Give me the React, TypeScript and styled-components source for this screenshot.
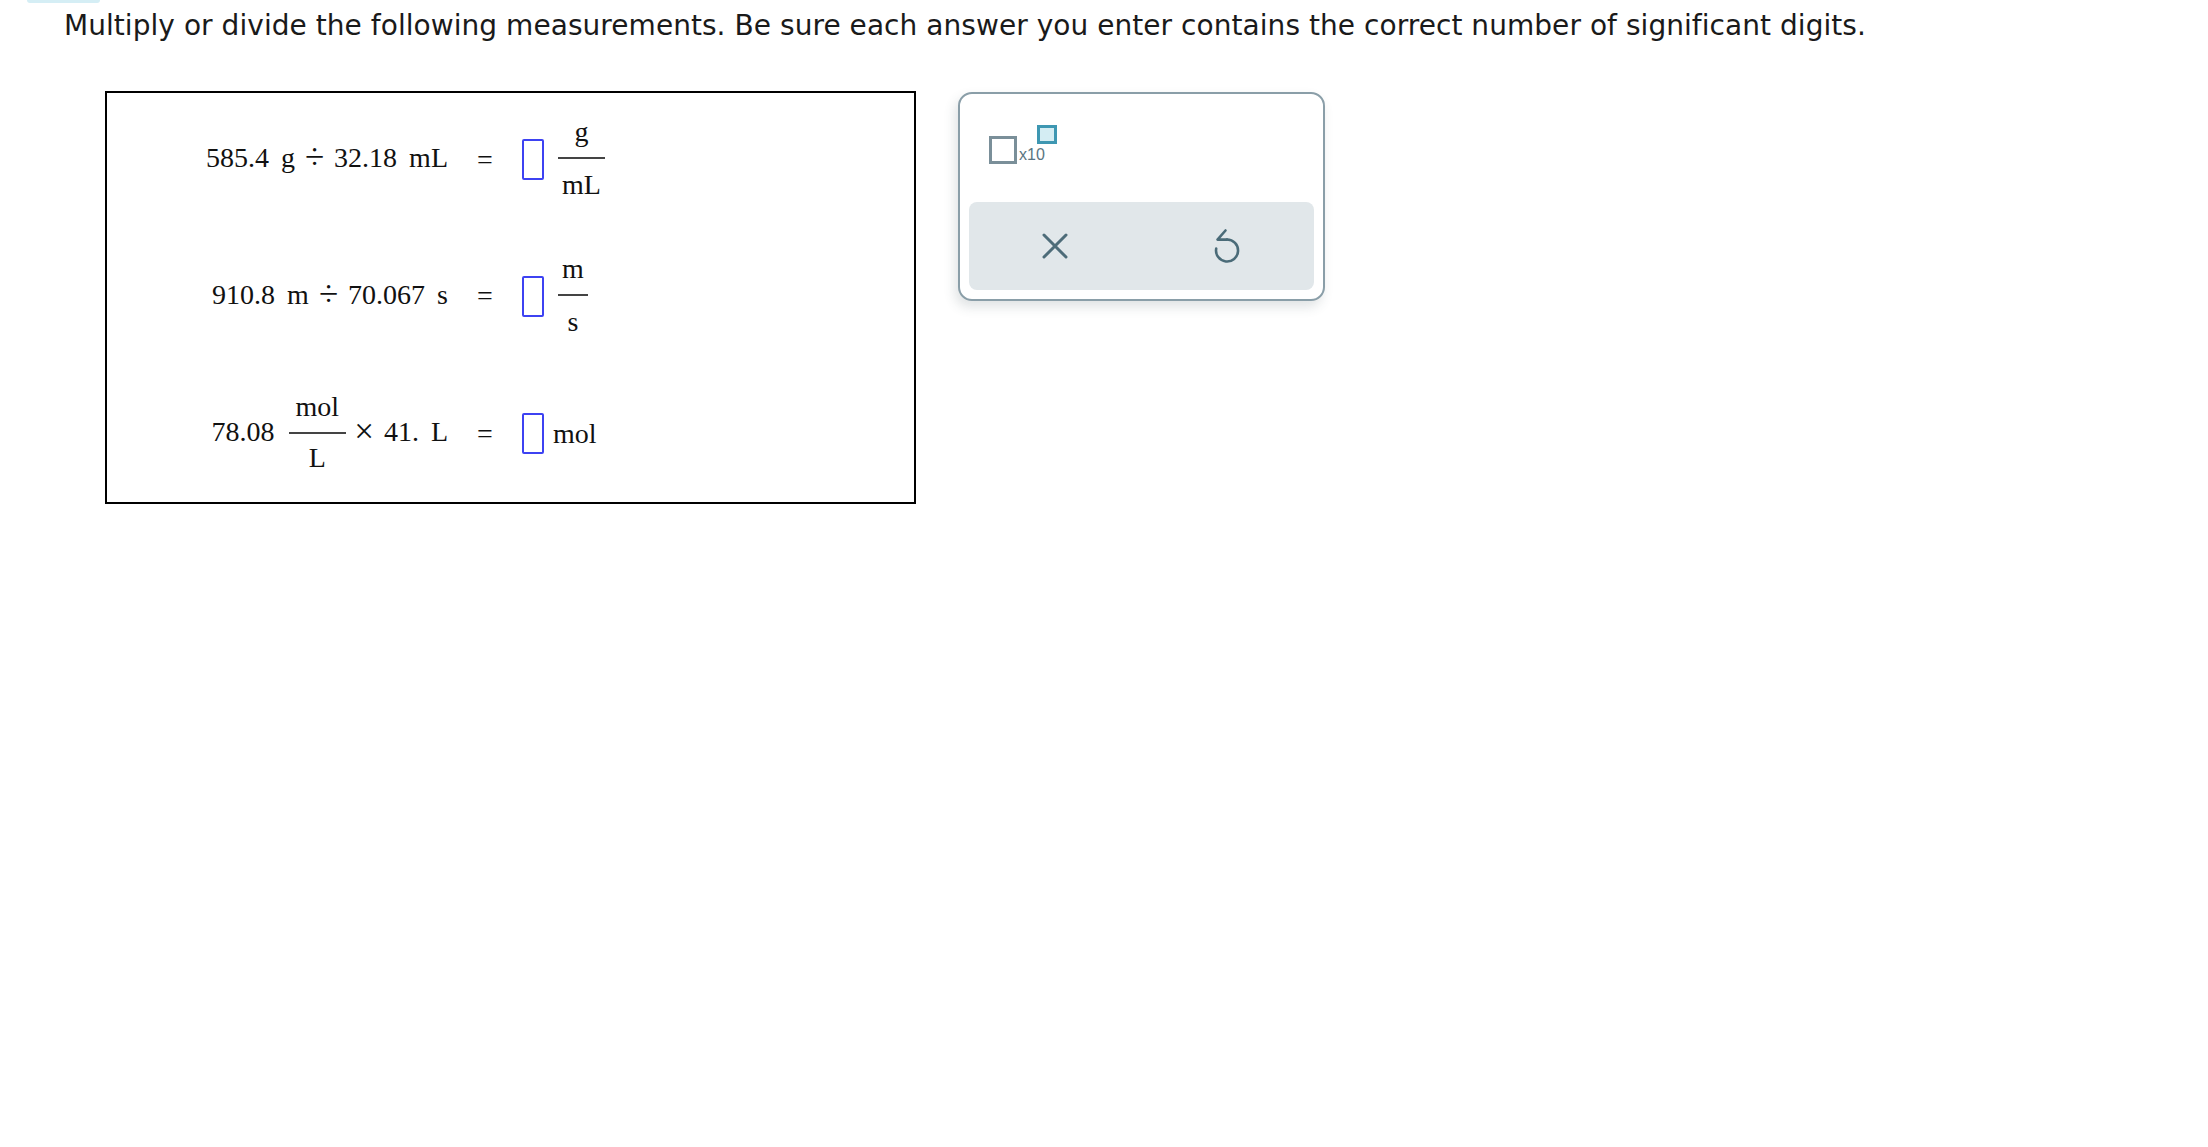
import React from 'react'
import styled, { createGlobalStyle } from 'styled-components'

const GlobalStyle = createGlobalStyle`
  html, body {
    margin: 0;
    padding: 0;
    background: #fff;
  }
  body {
    font-family: 'DejaVu Sans', Verdana, sans-serif;
    color: #1a1a1a;
  }
`

interface FracProps {
  num: string
  den: string
  $numGap: number
  $denGap: number
  $pad: number
  $lift?: number
  $drop?: number
  $ml?: number
  $mr?: number
}

const Fraction = ({ num, den, $numGap, $denGap, $pad, ...rest }: FracProps) => {
  return (
    <FracWrap {...rest}>
      <FracNum $gap={$numGap} $pad={$pad}>
        {num}
      </FracNum>
      <FracBar />
      <FracDen $gap={$denGap} $pad={$pad}>
        {den}
      </FracDen>
    </FracWrap>
  )
}

const UndoIcon = () => (
  <svg width="32" height="38" viewBox="0 0 32 38" fill="none">
    <path d="M15 12.5 A11 11 0 1 1 4.2 21.6" stroke="#4a6b78" strokeWidth="2.6" strokeLinecap="round" />
    <path d="M13.5 3.5 L5.5 12.6 L15 12.6" stroke="#4a6b78" strokeWidth="2.6" strokeLinecap="round" strokeLinejoin="round" />
  </svg>
)

const ClearIcon = () => (
  <svg width="26" height="26" viewBox="0 0 26 26" fill="none">
    <path d="M2 2 L24 24 M24 2 L2 24" stroke="#4d6c79" strokeWidth="3" strokeLinecap="round" />
  </svg>
)

const App = () => {
  return (
    <Page>
      <GlobalStyle />
      <Tab />
      <Prompt>
        Multiply or divide the following measurements. Be sure each answer you enter contains the correct number of
        significant digits.
      </Prompt>

      <Workspace>
        <ProblemBox>
          {/* row 1 */}
          <Expr>
            <span>585.4</span>
            <span>g</span>
            <Op>÷</Op>
            <span>32.18</span>
            <span>mL</span>
          </Expr>
          <Equals>=</Equals>
          <Answer>
            <AnswerSlot />
            <Fraction num="g" den="mL" $numGap={11} $denGap={12} $pad={4} $drop={2} $ml={14} />
          </Answer>

          {/* row 2 */}
          <Expr>
            <span>910.8</span>
            <span>m</span>
            <Op>÷</Op>
            <span>70.067</span>
            <span>s</span>
          </Expr>
          <Equals>=</Equals>
          <Answer>
            <AnswerSlot />
            <Fraction num="m" den="s" $numGap={11} $denGap={12} $pad={4} $drop={2} $ml={14} />
          </Answer>

          {/* row 3 */}
          <Expr>
            <span>78.08</span>
            <Fraction num="mol" den="L" $numGap={11} $denGap={10} $pad={7} $ml={2} $mr={-2} />
            <Op>×</Op>
            <span>41.</span>
            <span>L</span>
          </Expr>
          <Equals>=</Equals>
          <Answer>
            <AnswerSlot />
            <Unit>mol</Unit>
          </Answer>
        </ProblemBox>

        <Keypad>
          <TemplateRow>
            <SciTemplate>
              <BaseSquare />
              <Times10>x10</Times10>
              <ExpSquare />
            </SciTemplate>
          </TemplateRow>
          <ActionBar>
            <IconButton aria-label="clear">
              <ClearIcon />
            </IconButton>
            <IconButton aria-label="undo">
              <UndoIcon />
            </IconButton>
          </ActionBar>
        </Keypad>
      </Workspace>
    </Page>
  )
}

const Page = styled.div`
  width: 2208px;
  min-height: 1147px;
`
const Tab = styled.div`
  width: 73px;
  height: 3px;
  margin-left: 27px;
  background: #d5eef5;
  border-radius: 0 0 8px 8px;
`
const Prompt = styled.p`
  margin: 5.3px 0 0;
  padding-left: 64px;
  font-size: 28px;
  line-height: 36px;
  letter-spacing: 0.05px;
  color: #1a1a1a;
  white-space: nowrap;
`
const Workspace = styled.div`
  display: flex;
  align-items: flex-start;
  gap: 42px;
  margin-top: 46.3px;
  padding-left: 105px;
`
const ProblemBox = styled.div`
  box-sizing: border-box;
  width: 811px;
  height: 413px;
  border: 2px solid #000;
  display: grid;
  grid-template-columns: 341px 74px auto;
  grid-template-rows: 134px 139px 1fr;
  align-items: center;
  font-family: 'Liberation Serif', 'Times New Roman', serif;
  font-size: 28px;
  line-height: 28px;
  color: #111;
`
const Expr = styled.div`
  justify-self: end;
  display: flex;
  align-items: center;
  gap: 12px;
  padding-bottom: 3px;
  white-space: nowrap;
`
const Op = styled.span`
  margin: 0 -2px;
  font-size: 35px;
  line-height: 28px;
`
const Equals = styled.div`
  justify-self: center;
`
const Answer = styled.div`
  display: flex;
  align-items: center;
`
const AnswerSlot = styled.div`
  box-sizing: border-box;
  width: 22px;
  height: 41px;
  border: 2px solid #3d42f2;
  border-radius: 2px;
`
const Unit = styled.span`
  margin-left: 9px;
`
const FracWrap = styled.div<{ $lift?: number; $drop?: number; $ml?: number; $mr?: number }>`
  display: inline-flex;
  flex-direction: column;
  align-items: stretch;
  text-align: center;
  margin: ${p => p.$lift ?? 0}px ${p => p.$mr ?? 0}px ${p => p.$drop ?? 0}px ${p => p.$ml ?? 0}px;
`
const FracNum = styled.div<{ $gap: number; $pad: number }>`
  padding: 0 ${p => p.$pad}px ${p => p.$gap}px;
`
const FracBar = styled.div`
  height: 2px;
  background: #444;
`
const FracDen = styled.div<{ $gap: number; $pad: number }>`
  padding: ${p => p.$gap}px ${p => p.$pad}px 0;
`
const Keypad = styled.div`
  box-sizing: border-box;
  width: 367px;
  height: 209px;
  margin-top: 1px;
  border: 2px solid #8a9ea8;
  border-radius: 14px;
  background: #fff;
  box-shadow: -3px 6px 12px rgba(60, 80, 90, 0.16);
  padding: 0 9px 9px;
  display: flex;
  flex-direction: column;
`
const TemplateRow = styled.div`
  flex: 1;
  display: flex;
  align-items: flex-start;
  padding: 31px 0 0 20px;
`
const SciTemplate = styled.div`
  display: inline-flex;
  align-items: flex-end;
  height: 39px;
`
const BaseSquare = styled.div`
  box-sizing: border-box;
  width: 28px;
  height: 28px;
  border: 3px solid #7a8f99;
`
const Times10 = styled.span`
  margin: 0 0 1px 2px;
  font-family: 'Liberation Sans', Arial, sans-serif;
  font-size: 16px;
  line-height: 16px;
  color: #5a7582;
`
const ExpSquare = styled.div`
  box-sizing: border-box;
  align-self: flex-start;
  width: 20px;
  height: 19px;
  margin-left: -8px;
  border: 3px solid #3e97b2;
  background: #d4edf3;
`
const ActionBar = styled.div`
  height: 88px;
  border-radius: 8px;
  background: #e1e7ea;
  display: grid;
  grid-template-columns: 1fr 1fr;
  place-items: center;
`
const IconButton = styled.button`
  display: flex;
  align-items: center;
  justify-content: center;
  padding: 0;
  border: none;
  background: transparent;
  cursor: pointer;
`

export default App
